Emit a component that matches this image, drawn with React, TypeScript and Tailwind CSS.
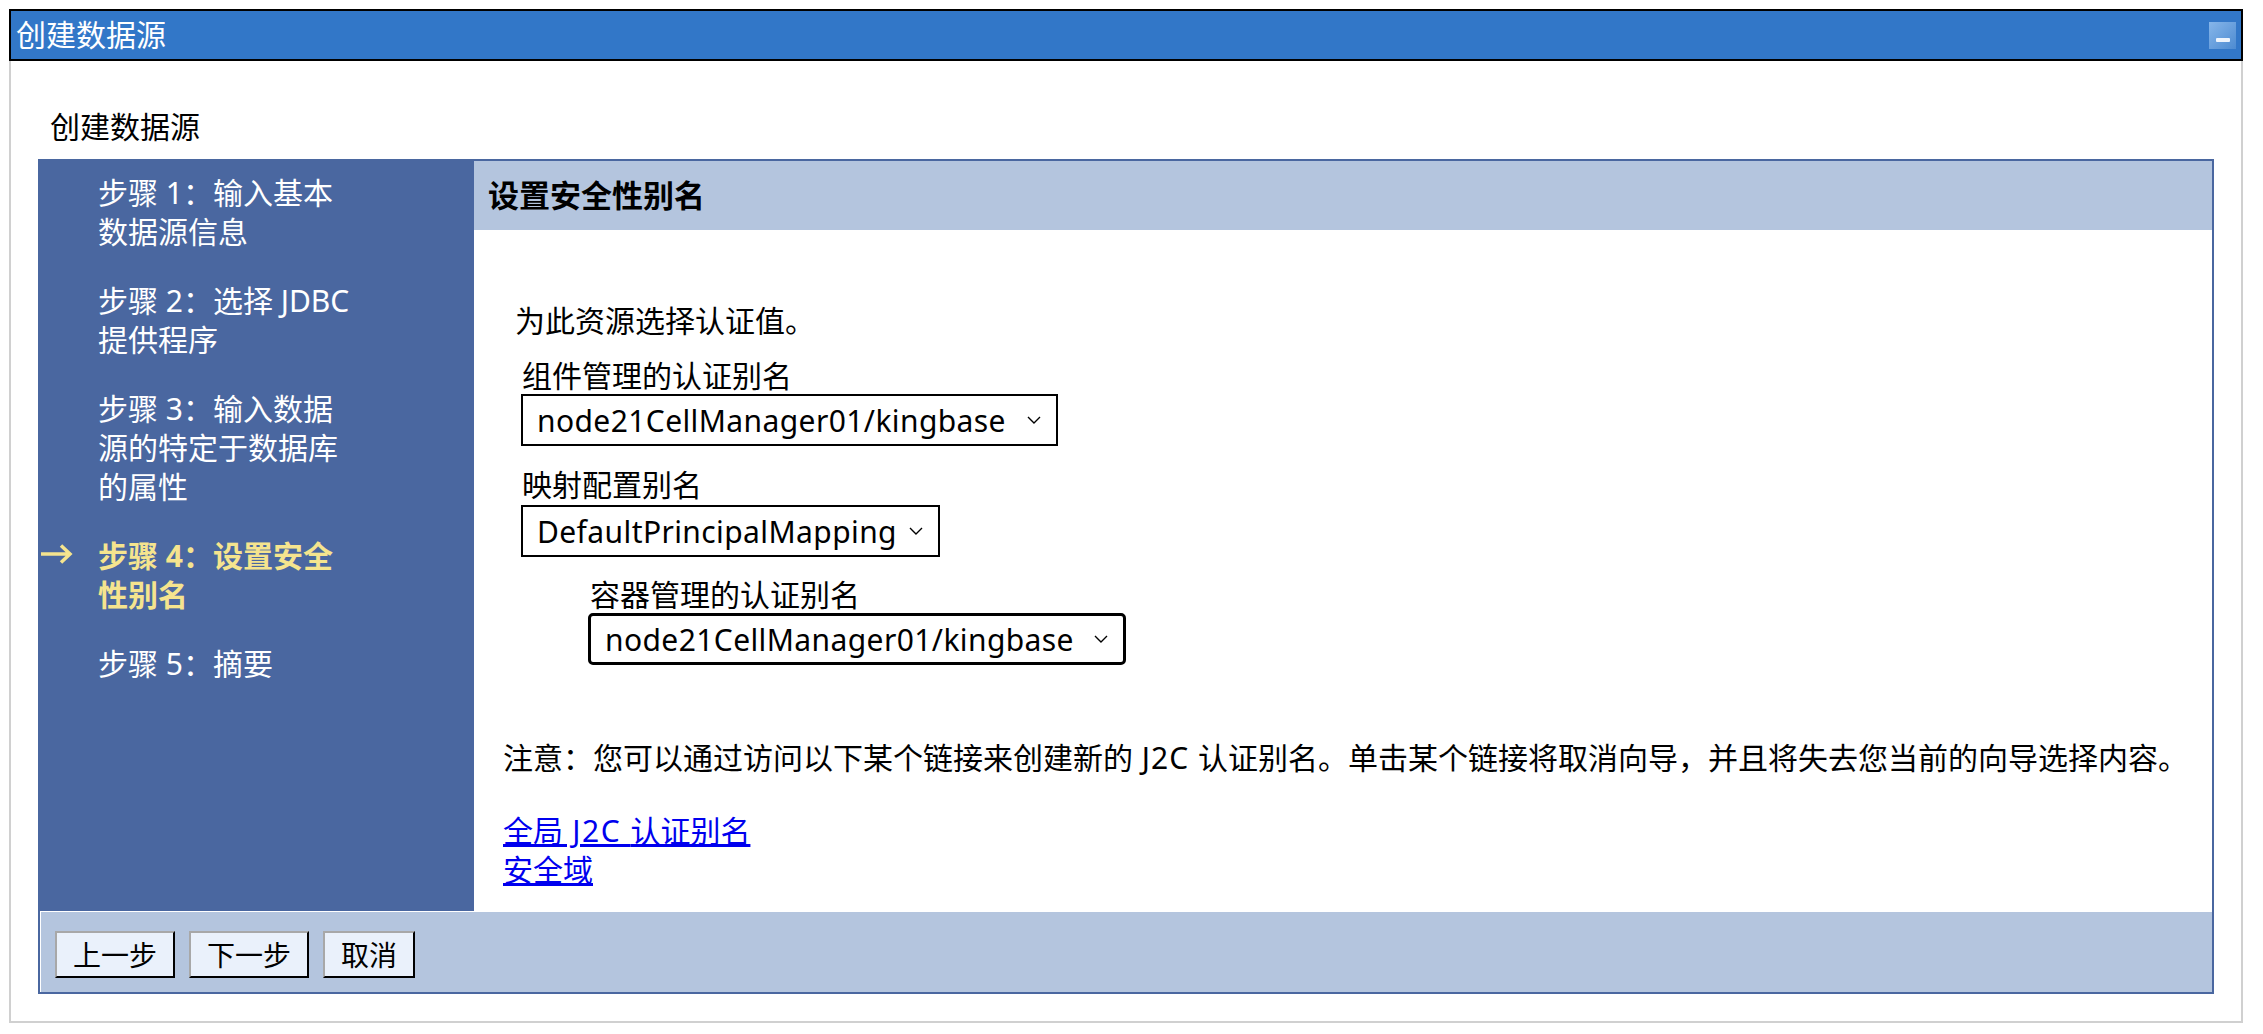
import clsx from 'clsx'

interface Step {
  lines: string[]
  current?: boolean
}

const steps: Step[] = [
  { lines: ['步骤 1：输入基本', '数据源信息'] },
  { lines: ['步骤 2：选择 JDBC', '提供程序'] },
  { lines: ['步骤 3：输入数据', '源的特定于数据库', '的属性'] },
  { lines: ['步骤 4：设置安全', '性别名'], current: true },
  { lines: ['步骤 5：摘要'] },
]

const Chevron = () => (
  <svg width="14" height="9" viewBox="0 0 14 9" className="absolute right-[15px] top-1/2 -translate-y-1/2">
    <path d="M1 1.5 L7 7.5 L13 1.5" fill="none" stroke="#000" strokeWidth="1.4" />
  </svg>
)

const FakeSelect = ({ value, width, focused }: { value: string; width: string; focused?: boolean }) => (
  <div
    className={clsx(
      'relative flex h-[52px] items-center bg-white pl-[14px] text-black',
      width,
      focused ? 'rounded-[5px] border-[3px] border-black' : 'border-2 border-black'
    )}
  >
    <span className="whitespace-nowrap tracking-[0.4px]">{value}</span>
    <Chevron />
  </div>
)

const App = () => {
  return (
    <div className="min-h-screen bg-white pb-[9px] pl-[9px] pr-[20px] pt-[9px] font-['Noto_Sans','Noto_Sans_CJK_SC',sans-serif] text-[30px] text-black">
      {/* title bar */}
      <div className="flex h-[52px] items-center justify-between border-2 border-black bg-[#3277c8] pl-[5px] pr-[5px]">
        <span className="leading-none text-white">创建数据源</span>
        <div className="flex h-[27px] w-[27px] shrink-0 items-end justify-center bg-[#5e98d9] bg-linear-to-br from-[#86b6ea] to-[#4d8bd1] pb-[7px]">
          <div className="h-[4px] w-[14px] rounded-[1px] bg-[#eef4fc]" />
        </div>
      </div>

      <div className="border-x-2 border-b-2 border-[#d0d0d0] px-[27px] pb-[27px]">
        <div className="mb-[13px] pl-[12px] pt-[46px] leading-[39px]">创建数据源</div>

        <div className="border-2 border-[#4a67a0]">
          <div className="flex h-[750px]">
            {/* steps */}
            <div className="w-[434px] bg-[#4a67a0] pt-[12px]">
              {steps.map((s, i) => (
                <div key={i} className="mb-[30px] flex">
                  <div className="w-[58px] pt-[7px]">
                    {s.current && (
                      <svg width="34" height="22" viewBox="0 0 34 22">
                        <path d="M1 11 H30 M21 2.5 L30 11 L21 19.5" fill="none" stroke="#f5e48e" strokeWidth="3.5" />
                      </svg>
                    )}
                  </div>
                  <div
                    className={clsx(
                      'leading-[39px]',
                      s.current ? 'font-bold text-[#f5e48e]' : 'text-white'
                    )}
                  >
                    {s.lines.map((l) => (
                      <div key={l} className="whitespace-nowrap">
                        {l}
                      </div>
                    ))}
                  </div>
                </div>
              ))}
            </div>

            {/* content */}
            <div className="flex flex-1 flex-col bg-white">
              <div className="flex h-[69px] items-center bg-[#b4c5de] pl-[14px]">
                <h2 className="text-[31px] font-bold leading-none">设置安全性别名</h2>
              </div>

              <div className="pl-[29px]">
                <p className="ml-[12px] mt-[71px] leading-[39px]">为此资源选择认证值。</p>

                <div className="ml-[19px] mt-[18px] leading-[36px]">组件管理的认证别名</div>
                <div className="ml-[18px]">
                  <FakeSelect value="node21CellManager01/kingbase" width="w-[537px]" />
                </div>

                <div className="ml-[19px] mt-[21px] leading-[36px]">映射配置别名</div>
                <div className="ml-[18px] mt-[2px]">
                  <FakeSelect value="DefaultPrincipalMapping" width="w-[419px]" />
                </div>

                <div className="ml-[87px] mt-[20px] leading-[36px]">容器管理的认证别名</div>
                <div className="ml-[85px]">
                  <FakeSelect value="node21CellManager01/kingbase" width="w-[538px]" focused />
                </div>

                <p className="mt-[73px] whitespace-nowrap leading-[39px]">
                  注意：您可以通过访问以下某个链接来创建新的<span className="tracking-[1px]"> J2C </span>认证别名。单击某个链接将取消向导，并且将失去您当前的向导选择内容。
                </p>

                <div className="mt-[34px] flex flex-col items-start leading-[39px]">
                  <a href="#" className="text-[#0000ee] underline">
                    全局<span className="tracking-[1.5px]"> J2C </span>认证别名
                  </a>
                  <a href="#" className="text-[#0000ee] underline">
                    安全域
                  </a>
                </div>
              </div>
            </div>
          </div>

          {/* footer buttons */}
          <div className="flex h-[81px] items-start gap-[14px] border-t border-white bg-[#b4c5de] pl-[15px] pt-[19px] shadow-[inset_1px_0_0_#fff]">
            {['上一步', '下一步', '取消'].map((b) => (
              <button
                key={b}
                className="h-[47px] border-2 border-b-black border-l-[#a8a8a8] border-r-black border-t-[#a8a8a8] bg-[#eaf1fb] px-[16px] text-[28px] leading-none text-black"
              >
                {b}
              </button>
            ))}
          </div>
        </div>
      </div>
    </div>
  )
}

export default App
